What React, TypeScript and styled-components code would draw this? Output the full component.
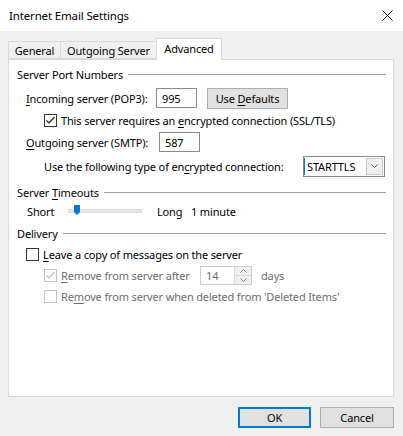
import React from 'react';
import styled, { createGlobalStyle } from 'styled-components';

const GlobalStyle = createGlobalStyle`
  html, body {
    margin: 0;
    padding: 0;
    background: #f0f0f0;
  }
  body {
    font-family: "Noto Sans", "Segoe UI", sans-serif;
    font-size: 11px;
    letter-spacing: -0.15px;
    color: #000;
  }
`;

const Window = styled.div`
  width: 403px;
  height: 436px;
  background: #f0f0f0;
  display: flex;
  flex-direction: column;
  overflow: hidden;
`;

const TitleBar = styled.div`
  height: 31px;
  background: #fff;
  display: flex;
  align-items: center;
  justify-content: space-between;
  padding: 0 10px 0 9px;
  box-sizing: border-box;
  font-size: 11.5px;
`;

const Body = styled.div`
  padding: 7px 9px 0 8px;
  display: flex;
  flex-direction: column;
`;

const TabStrip = styled.div`
  display: flex;
  align-items: flex-end;
  height: 21px;
`;

const Tab = styled.div<{ $w: number; $active?: boolean }>`
  width: ${p => p.$w}px;
  height: ${p => (p.$active ? 22 : 18)}px;
  margin-left: -1px;
  margin-bottom: ${p => (p.$active ? -1 : 0)}px;
  box-sizing: border-box;
  border: 1px solid #d9d9d9;
  border-bottom: ${p => (p.$active ? 'none' : '1px solid #d9d9d9')};
  background: ${p => (p.$active ? '#fff' : '#f0f0f0')};
  display: flex;
  align-items: ${p => (p.$active ? 'flex-start' : 'center')};
  padding-top: ${p => (p.$active ? 2 : 0)}px;
  justify-content: center;
  position: relative;
  z-index: ${p => (p.$active ? 1 : 0)};

  &:first-child {
    margin-left: 0;
  }
`;

const Panel = styled.div`
  height: 338px;
  box-sizing: border-box;
  border: 1px solid #d9d9d9;
  background: #fff;
  padding: 0 7px 0 8px;
  display: flex;
  flex-direction: column;
`;

const GroupHeader = styled.div<{ $mt: number }>`
  display: flex;
  align-items: center;
  height: 16px;
  margin-top: ${p => p.$mt}px;
`;

const GroupRule = styled.div`
  flex: 1;
  height: 0;
  margin: 1px 0 0 5px;
  border-top: 1px solid #a0a0a0;
`;

const Row = styled.div<{ $h: number; $mt?: number; $indent: number }>`
  display: flex;
  align-items: center;
  height: ${p => p.$h}px;
  margin-top: ${p => p.$mt ?? 0}px;
  padding-left: ${p => p.$indent}px;
  white-space: nowrap;
`;

const Label = styled.span<{ $w?: number; $disabled?: boolean }>`
  display: inline-block;
  width: ${p => (p.$w ? `${p.$w}px` : 'auto')};
  flex-shrink: 0;
  color: ${p => (p.$disabled ? '#6d6d6d' : '#000')};
`;

const Key = styled.span`
  text-decoration: underline;
  text-underline-offset: 2px;
`;

const TextBox = styled.div<{ $w: number }>`
  width: ${p => p.$w}px;
  height: 20px;
  box-sizing: border-box;
  border: 1px solid #8a8a8a;
  background: #fff;
  padding-left: 5px;
  display: flex;
  align-items: center;
`;

const Button = styled.button<{ $w: number; $default?: boolean }>`
  width: ${p => p.$w}px;
  height: 21px;
  box-sizing: border-box;
  margin: 0;
  padding: 0;
  font: inherit;
  letter-spacing: inherit;
  color: #000;
  background: #e1e1e1;
  border: ${p => (p.$default ? '2px solid #0078d7' : '1px solid #adadad')};
`;

const Combo = styled.div`
  width: 82px;
  height: 21px;
  box-sizing: border-box;
  border: 1px solid #8a8a8a;
  background: #fff;
  display: flex;
  align-items: center;
  padding: 0 1px 0 0;
`;

const Caret = styled.span`
  width: 1px;
  height: 17px;
  background: #0078d7;
  margin-right: 2px;
`;

const ComboText = styled.span`
  flex: 1;
`;

const ComboArrow = styled.div`
  width: 17px;
  height: 17px;
  box-sizing: border-box;
  border: 1px solid #c8c8c8;
  background: #f0f0f0;
  display: flex;
  align-items: center;
  justify-content: center;
`;

const SpinBox = styled.div`
  width: 52px;
  height: 19px;
  box-sizing: border-box;
  border: 1px solid #cccccc;
  background: #fff;
  display: flex;
  align-items: stretch;
`;

const SpinValue = styled.span`
  flex: 1;
  padding-left: 5px;
  color: #6d6d6d;
  display: flex;
  align-items: center;
`;

const SpinButtons = styled.div`
  width: 16px;
  display: flex;
  flex-direction: column;
  border-left: 1px solid #d9d9d9;
  background: #f0f0f0;
`;

const SpinHalf = styled.div`
  flex: 1;
  display: flex;
  align-items: center;
  justify-content: center;

  & + & {
    border-top: 1px solid #d9d9d9;
  }
`;

const Box = styled.span<{ $disabled?: boolean }>`
  width: 13px;
  height: 13px;
  box-sizing: border-box;
  border: 1px solid ${p => (p.$disabled ? '#c4c4c4' : '#333')};
  background: #fff;
  display: inline-flex;
  align-items: center;
  justify-content: center;
  margin-right: 4px;
  flex-shrink: 0;
`;

const Slider = styled.div`
  width: 74px;
  height: 16px;
  position: relative;
  flex-shrink: 0;
`;

const SliderTrack = styled.div`
  position: absolute;
  left: 0;
  right: 0;
  top: 6px;
  height: 4px;
  box-sizing: border-box;
  background: #e7e7e7;
  border: 1px solid #dadada;
`;

const SliderThumb = styled.svg`
  position: absolute;
  left: 6px;
  top: 2px;
`;

const Footer = styled.div`
  display: flex;
  justify-content: flex-end;
  gap: 9px;
  margin-top: 10px;
`;

const CheckBox = ({ checked, disabled }: { checked?: boolean; disabled?: boolean }) => (
  <Box $disabled={disabled}>
    {checked && (
      <svg width="11" height="11" viewBox="0 0 11 11">
        <path d="M1.5 5.5 L4 8 L9.5 2" fill="none" stroke={disabled ? '#bcbcbc' : '#222'} strokeWidth="1.2" />
      </svg>
    )}
  </Box>
);

const Chevron = ({ up, color = '#606060' }: { up?: boolean; color?: string }) => (
  <svg width="7" height="4" viewBox="0 0 7 4">
    <path d={up ? 'M0.5 3.5 L3.5 0.5 L6.5 3.5' : 'M0.5 0.5 L3.5 3.5 L6.5 0.5'} fill="none" stroke={color} strokeWidth="1" />
  </svg>
);

const App: React.FC = () => {
  return (
    <Window>
      <GlobalStyle />
      <TitleBar>
        <span>Internet Email Settings</span>
        <svg width="11" height="11" viewBox="0 0 11 11">
          <path d="M0.5 0.5 L10.5 10.5 M10.5 0.5 L0.5 10.5" stroke="#000" strokeWidth="1" />
        </svg>
      </TitleBar>

      <Body>
        <TabStrip>
          <Tab $w={53}>General</Tab>
          <Tab $w={97}>Outgoing Server</Tab>
          <Tab $w={66} $active>Advanced</Tab>
        </TabStrip>

        <Panel>
          <GroupHeader $mt={6}>
            <span>Server Port Numbers</span>
            <GroupRule />
          </GroupHeader>

          <Row $h={22} $mt={5} $indent={9}>
            <Label $w={130}><Key>I</Key>ncoming server (POP3):</Label>
            <TextBox $w={41}>995</TextBox>
            <Button $w={81} style={{ marginLeft: 10 }}>Use <Key>D</Key>efaults</Button>
          </Row>

          <Row $h={22} $indent={27}>
            <CheckBox checked />
            <Label>This server requires an <Key>e</Key>ncrypted connection (SSL/TLS)</Label>
          </Row>

          <Row $h={22} $indent={9}>
            <Label $w={133}><Key>O</Key>utgoing server (SMTP):</Label>
            <TextBox $w={41}>587</TextBox>
          </Row>

          <Row $h={24} $mt={1} $indent={27}>
            <Label $w={259}>Use the following type of en<Key>c</Key>rypted connection:</Label>
            <Combo>
              <Caret />
              <ComboText>STARTTLS</ComboText>
              <ComboArrow>
                <Chevron />
              </ComboArrow>
            </Combo>
          </Row>

          <GroupHeader $mt={6}>
            <span>Server <Key>T</Key>imeouts</span>
            <GroupRule />
          </GroupHeader>

          <Row $h={20} $mt={1} $indent={10}>
            <Label $w={41}>Short</Label>
            <Slider>
              <SliderTrack />
              <SliderThumb width="6" height="10" viewBox="0 0 6 10">
                <path d="M0 0 H6 V7 L3 10 L0 7 Z" fill="#0078d7" />
              </SliderThumb>
            </Slider>
            <Label $w={34} style={{ marginLeft: 15 }}>Long</Label>
            <Label>1 minute</Label>
          </Row>

          <GroupHeader $mt={4}>
            <span>Delivery</span>
            <GroupRule />
          </GroupHeader>

          <Row $h={20} $mt={3} $indent={9}>
            <CheckBox />
            <Label><Key>L</Key>eave a copy of messages on the server</Label>
          </Row>

          <Row $h={20} $mt={1} $indent={27}>
            <CheckBox checked disabled />
            <Label $w={139} $disabled><Key>R</Key>emove from server after</Label>
            <SpinBox>
              <SpinValue>14</SpinValue>
              <SpinButtons>
                <SpinHalf><Chevron up color="#8a8a8a" /></SpinHalf>
                <SpinHalf><Chevron color="#8a8a8a" /></SpinHalf>
              </SpinButtons>
            </SpinBox>
            <Label $disabled style={{ marginLeft: 9 }}>days</Label>
          </Row>

          <Row $h={20} $mt={1} $indent={27}>
            <CheckBox disabled />
            <Label $disabled>Re<Key>m</Key>ove from server when deleted from 'Deleted Items'</Label>
          </Row>
        </Panel>

        <Footer>
          <Button $w={73} $default>OK</Button>
          <Button $w={74}>Cancel</Button>
        </Footer>
      </Body>
    </Window>
  );
};

export default App;
